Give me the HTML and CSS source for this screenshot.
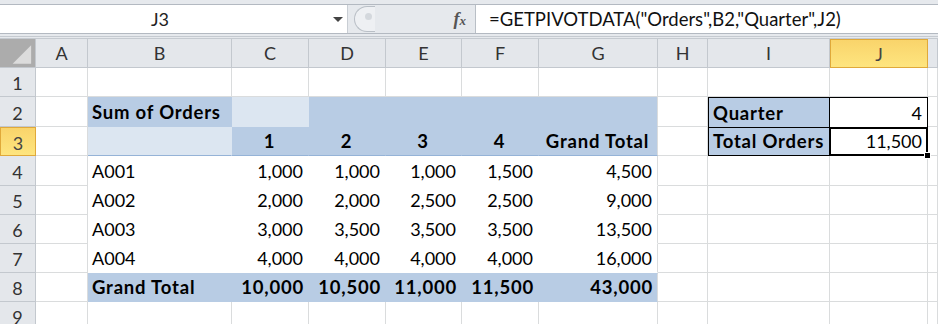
FILE: index.html
```html
<!DOCTYPE html>
<html>
<head>
<meta charset="utf-8">
<link rel="stylesheet" href="styles.css">
</head>
<body>
<div class="fbar">
  <div class="namebox"><span class="nb-text">J3</span><span class="nb-arrow"></span></div>
  <div class="pill"><span class="knob"></span><span class="fx">f<span class="fx-x">x</span></span></div>
  <div class="formula">=GETPIVOTDATA("Orders",B2,"Quarter",J2)</div>
</div>
<div class="sep"></div>
<div class="sheet">
  <!-- header row -->
  <div class="hd corner"><svg width="36" height="28" viewBox="0 0 36 28"><polygon points="32,6 32,25 13,25" fill="#dcdcdc"/></svg></div>
  <div class="hd">A</div><div class="hd">B</div><div class="hd">C</div><div class="hd">D</div><div class="hd">E</div><div class="hd">F</div><div class="hd">G</div><div class="hd">H</div><div class="hd">I</div><div class="hd sel">J</div><div class="hd"></div>

  <!-- row 1 -->
  <div class="rh">1</div><div class="c"></div><div class="c"></div><div class="c"></div><div class="c"></div><div class="c"></div><div class="c"></div><div class="c"></div><div class="c"></div><div class="c"></div><div class="c"></div><div class="c"></div>

  <!-- row 2 -->
  <div class="rh">2</div><div class="c"></div>
  <div class="c pv blue b">Sum of Orders</div><div class="c pv light"></div><div class="c pv blue"></div><div class="c pv blue"></div><div class="c pv blue"></div><div class="c pv blue last"></div>
  <div class="c"></div><div class="c box blue b lft">Quarter</div><div class="c box r">4</div><div class="c"></div>

  <!-- row 3 -->
  <div class="rh sel">3</div><div class="c"></div>
  <div class="c pv light line-b"></div><div class="c pv blue b ctr line-b">1</div><div class="c pv blue b ctr line-b">2</div><div class="c pv blue b ctr line-b">3</div><div class="c pv blue b ctr line-b">4</div><div class="c pv blue b ctr line-b last">Grand Total</div>
  <div class="c"></div><div class="c box blue b lft bot">Total Orders</div><div class="c box r bot active">11,500</div><div class="c"></div>

  <!-- row 4 -->
  <div class="rh">4</div><div class="c"></div>
  <div class="c pv">A001</div><div class="c pv r">1,000</div><div class="c pv r">1,000</div><div class="c pv r">1,000</div><div class="c pv r">1,500</div><div class="c pv r last">4,500</div>
  <div class="c"></div><div class="c"></div><div class="c"></div><div class="c"></div>

  <!-- row 5 -->
  <div class="rh">5</div><div class="c"></div>
  <div class="c pv">A002</div><div class="c pv r">2,000</div><div class="c pv r">2,000</div><div class="c pv r">2,500</div><div class="c pv r">2,500</div><div class="c pv r last">9,000</div>
  <div class="c"></div><div class="c"></div><div class="c"></div><div class="c"></div>

  <!-- row 6 -->
  <div class="rh">6</div><div class="c"></div>
  <div class="c pv">A003</div><div class="c pv r">3,000</div><div class="c pv r">3,500</div><div class="c pv r">3,500</div><div class="c pv r">3,500</div><div class="c pv r last">13,500</div>
  <div class="c"></div><div class="c"></div><div class="c"></div><div class="c"></div>

  <!-- row 7 -->
  <div class="rh">7</div><div class="c"></div>
  <div class="c pv">A004</div><div class="c pv r">4,000</div><div class="c pv r">4,000</div><div class="c pv r">4,000</div><div class="c pv r">4,000</div><div class="c pv r last">16,000</div>
  <div class="c"></div><div class="c"></div><div class="c"></div><div class="c"></div>

  <!-- row 8 -->
  <div class="rh">8</div><div class="c"></div>
  <div class="c pv blue b line-t">Grand Total</div><div class="c pv blue b r line-t">10,000</div><div class="c pv blue b r line-t">10,500</div><div class="c pv blue b r line-t">11,000</div><div class="c pv blue b r line-t">11,500</div><div class="c pv blue b r line-t last">43,000</div>
  <div class="c"></div><div class="c"></div><div class="c"></div><div class="c"></div>

  <!-- row 9 -->
  <div class="rh">9</div><div class="c"></div><div class="c"></div><div class="c"></div><div class="c"></div><div class="c"></div><div class="c"></div><div class="c"></div><div class="c"></div><div class="c"></div><div class="c"></div><div class="c"></div>
</div>
</body>
</html>
```
FILE: styles.css
```css
html, body {
  margin: 0;
  padding: 0;
}
body {
  width: 938px;
  height: 324px;
  overflow: hidden;
  background: #e6e9ed;
  font-family: Lato, "Liberation Sans", sans-serif;
  font-size: 18px;
  color: #000;
}
.fbar {
  margin-top: 4px;
  height: 28px;
  border-top: 1px solid #b3b9c1;
  border-bottom: 1px solid #b3b9c1;
  display: flex;
  background: #fff;
}
.namebox {
  width: 347px;
  background: #fff;
  display: flex;
  align-items: center;
  position: relative;
  border-right: 1px solid #c9ced4;
}
.nb-text {
  width: 320px;
  text-align: center;
  color: #222;
}
.nb-arrow {
  width: 0;
  height: 0;
  margin-left: 13px;
  border-left: 5px solid transparent;
  border-right: 5px solid transparent;
  border-top: 5px solid #444;
}
.pill {
  width: 128px;
  background: #e6e9ed;
  display: flex;
  align-items: center;
  justify-content: space-between;
  box-sizing: border-box;
  padding: 0 9px 0 12px;
  border-right: 1px solid #b9bfc6;
  position: relative;
}
.pill::before {
  content: "";
  position: absolute;
  left: 6px;
  top: 1px;
  bottom: 1px;
  width: 20px;
  border-radius: 14px 0 0 14px;
  border: 1px solid #b9bfc6;
  border-right: none;
  background: #eef0f3;
}
.knob {
  position: relative;
  width: 7px;
  height: 7px;
  border-radius: 50%;
  background: #d4d8dd;
  margin-top: -6px;
  margin-left: 5px;
}
.fx {
  font-family: "Liberation Serif", serif;
  font-style: italic;
  font-weight: bold;
  font-size: 18px;
  color: #555;
}
.fx-x {
  font-size: 13px;
}
.formula {
  flex: 1;
  background: #fff;
  padding-left: 13px;
  display: flex;
  align-items: center;
  color: #111;
  font-size: 18.5px;
}
.sep {
  height: 5px;
  border-bottom: 1px solid #c5cad0;
  background: #e6e9ed;
  box-sizing: border-box;
  position: relative;
}
.sep::before {
  content: "";
  position: absolute;
  left: 0;
  right: 0;
  top: 2px;
  height: 1px;
  background: #c5cad0;
}
.sheet {
  display: grid;
  grid-template-columns: 36px 52px 144px 77px 77px 76px 77px 119px 50px 122px 98px 10px;
  grid-template-rows: 29px 29px 30px 29px 30px 29px 29px 29px 29px 29px;
  background: #fff;
}
.hd, .rh {
  background: #e4e7eb;
  border-right: 1px solid #c3c8ce;
  border-bottom: 1px solid #c3c8ce;
  box-sizing: border-box;
  display: flex;
  align-items: center;
  justify-content: center;
  color: #333;
  font-size: 18px;
}
.rh {
  padding-top: 2px;
}
.corner {
  background: #acacac;
  padding: 0;
  align-items: stretch;
  justify-content: stretch;
}
.corner svg {
  display: block;
}
.hd.sel, .rh.sel {
  background: linear-gradient(#f9d46b, #fee57f);
  border: 1px solid #e0a93a;
  color: #444;
}
.c {
  box-sizing: border-box;
  border-right: 1px solid #dadcdd;
  border-bottom: 1px solid #dadcdd;
  display: flex;
  align-items: flex-end;
  padding: 0 5px 3px 4px;
  line-height: 22px;
  white-space: nowrap;
  position: relative;
}
.r {
  justify-content: flex-end;
}
.ctr {
  justify-content: center;
}
.b {
  font-weight: bold;
  font-size: 18.5px;
  letter-spacing: 0.8px;
}
.b.r {
  padding-right: 4px;
}
.pv {
  border-color: #fff;
}
.pv.blue {
  background: #b8cce4;
  border-color: #b8cce4;
}
.pv.light {
  background: #dce6f1;
  border-color: #dce6f1;
}
.pv.last {
  border-right-color: #dadcdd;
}
.line-b {
  border-bottom-color: #95b3d7 !important;
}
.line-t {
  border-top: 1px solid #95b3d7;
}
.box {
  border: 1px solid #000;
  border-left: none;
  border-bottom: none;
}
.box.lft {
  border-left: 1px solid #000;
}
.box.bot {
  border-bottom: 1px solid #000;
}
.box.blue {
  background: #b8cce4;
}
.active::after {
  content: "";
  position: absolute;
  left: -1px;
  top: -1px;
  right: -1px;
  bottom: -1px;
  border: 2px solid #000;
  pointer-events: none;
}
.active::before {
  content: "";
  position: absolute;
  right: -4px;
  bottom: -4px;
  width: 5px;
  height: 5px;
  background: #000;
  border: 1px solid #fff;
  z-index: 2;
}
```
